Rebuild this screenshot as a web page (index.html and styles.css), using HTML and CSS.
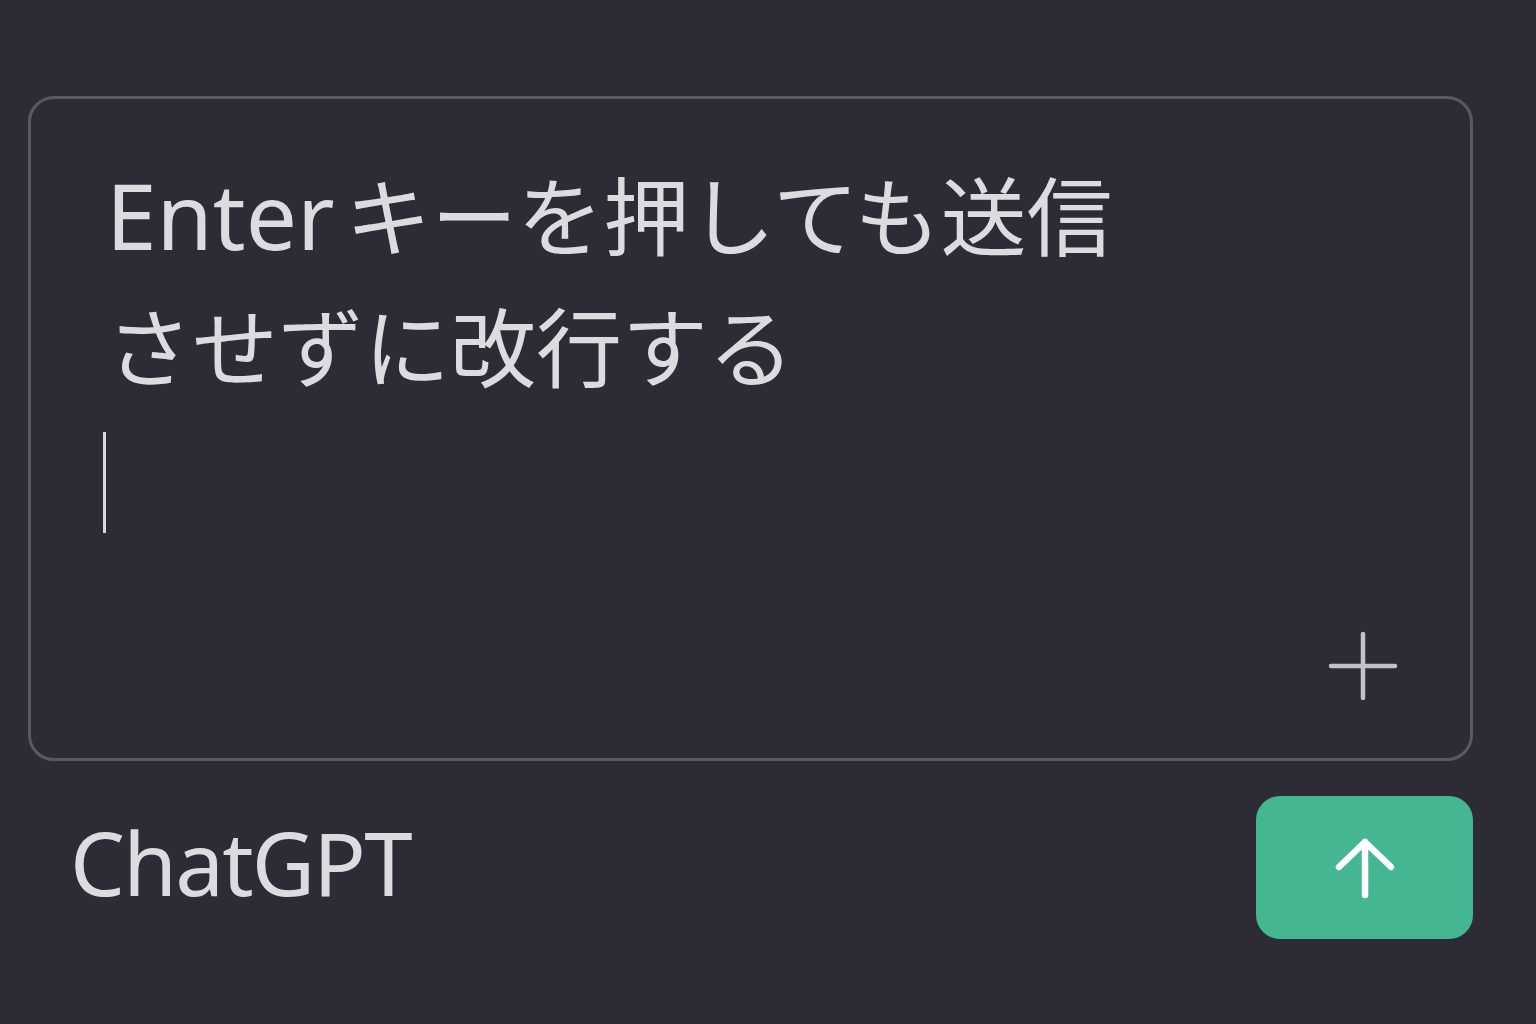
FILE: index.html
```html
<!DOCTYPE html>
<html lang="ja">
<head>
<meta charset="utf-8">
<link rel="stylesheet" href="styles.css">
</head>
<body>
<div class="page">
  <div class="composer">
    <div class="text">
      <div class="line"><span class="latin">Enter </span>キーを押しても送信</div>
      <div class="line">させずに改行する</div>
      <div class="line"><span class="caret"></span></div>
    </div>
    <div class="tools">
      <svg class="plus" width="70" height="70" viewBox="0 0 70 70"><path d="M35 3V67M3 35H67" stroke="#c3c2c9" stroke-width="4.5" stroke-linecap="round" fill="none"/></svg>
    </div>
  </div>
  <div class="footer">
    <div class="brand">ChatGPT</div>
    <button class="send">
      <svg width="70" height="70" viewBox="0 0 70 70"><path d="M35 62V9M9 34L35 9L61 34" stroke="#ffffff" stroke-width="6.5" stroke-linecap="round" stroke-linejoin="round" fill="none"/></svg>
    </button>
  </div>
</div>
</body>
</html>
```
FILE: styles.css
```css
html, body {
  margin: 0;
  padding: 0;
  background: #2c2b36;
}
body {
  width: 1536px;
  height: 1024px;
  overflow: hidden;
  font-family: "Noto Sans CJK JP", "Noto Sans", sans-serif;
  color: #dcdce0;
}
.page {
  padding: 96px 63px 0 28px;
  display: flex;
  flex-direction: column;
}
.composer {
  box-sizing: border-box;
  height: 665px;
  border: 3px solid #595964;
  border-radius: 26px;
  display: flex;
  flex-direction: column;
  justify-content: space-between;
  padding: 48px 72px 57px 75px;
}
.text {
  font-size: 86px;
  line-height: 131px;
}
.line {
  height: 131px;
  white-space: nowrap;
}
.latin {
  font-family: "Noto Sans", sans-serif;
  font-size: 91px;
  word-spacing: -13px;
}
.caret {
  display: inline-block;
  width: 3px;
  height: 101px;
  background: #d8d8dd;
  margin-left: -3px;
  vertical-align: -21px;
}
.tools {
  display: flex;
  justify-content: flex-end;
}
.plus {
  display: block;
}
.footer {
  margin-top: 35px;
  display: flex;
  justify-content: space-between;
  align-items: center;
}
.brand {
  padding-left: 42px;
  padding-bottom: 10px;
  font-size: 87px;
  line-height: 1;
  letter-spacing: -1.8px;
  color: #dcdce0;
  font-family: "Noto Sans", "Noto Sans CJK JP", sans-serif;
}
.send {
  width: 217px;
  height: 143px;
  border: none;
  border-radius: 24px;
  background: #44b792;
  display: flex;
  align-items: center;
  justify-content: center;
  padding: 0;
}
.send svg {
  display: block;
}
```
